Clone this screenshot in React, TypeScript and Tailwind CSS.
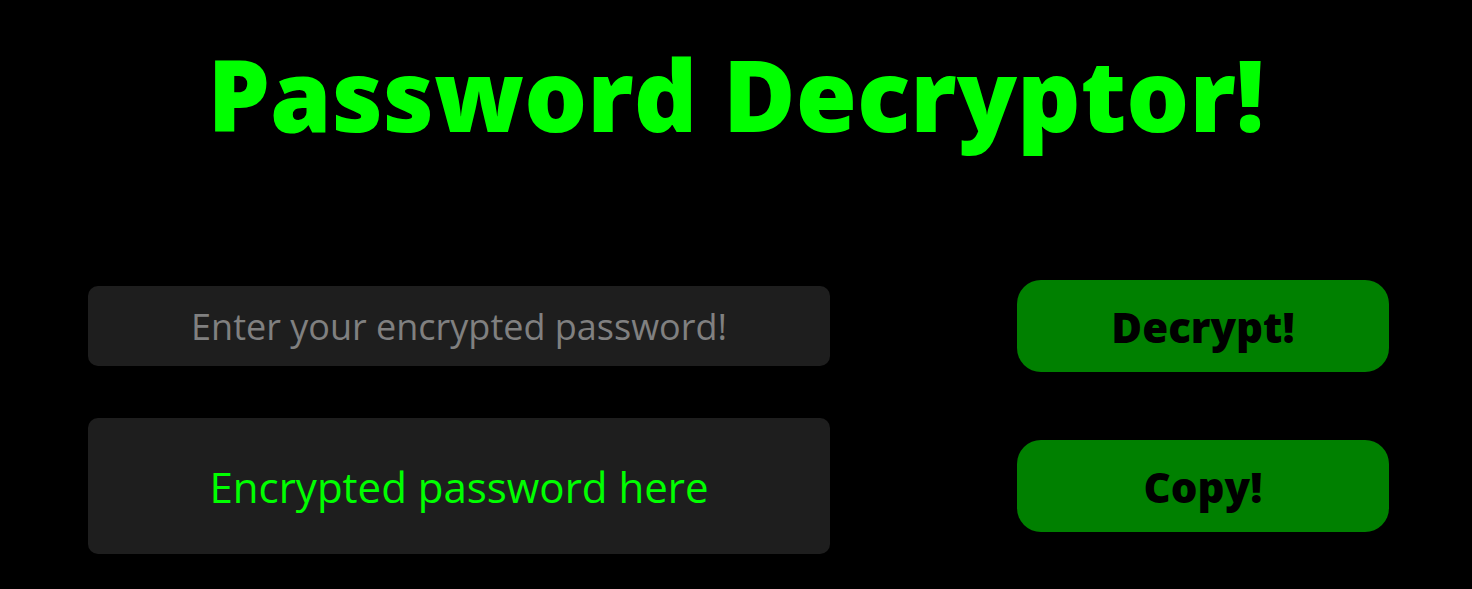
import { useState } from "react";

export default function App() {
  const [value, setValue] = useState("");

  return (
    <div
      className="min-h-screen w-full bg-black text-center"
      style={{ fontFamily: '"Open Sans", sans-serif' }}
    >
      <h1 className="pt-[24px] text-[99px] leading-[140px] font-extrabold text-[#00ff00]">
        Password Decryptor!
      </h1>

      <div className="mt-[116px] flex flex-col gap-[46px] px-[88px]">
        <div className="flex items-center justify-between">
          <input
            value={value}
            onChange={(e) => setValue(e.target.value)}
            placeholder="Enter your encrypted password!"
            className="h-[80px] w-[742px] rounded-[10px] bg-[#1e1e1e] text-center text-[36px] text-[#00ff00] outline-none placeholder:text-[#808080]"
          />
          <button className="mr-[-5px] h-[92px] w-[372px] rounded-[24px] bg-[#008000] text-[42px] font-extrabold text-black">
            Decrypt!
          </button>
        </div>

        <div className="flex items-center justify-between">
          <div className="flex h-[136px] w-[742px] items-center justify-center rounded-[10px] bg-[#1e1e1e] text-[42px] text-[#00ff00]">
            Encrypted password here
          </div>
          <button className="mr-[-5px] h-[92px] w-[372px] rounded-[24px] bg-[#008000] text-[42px] font-extrabold text-black">
            Copy!
          </button>
        </div>
      </div>
    </div>
  );
}
